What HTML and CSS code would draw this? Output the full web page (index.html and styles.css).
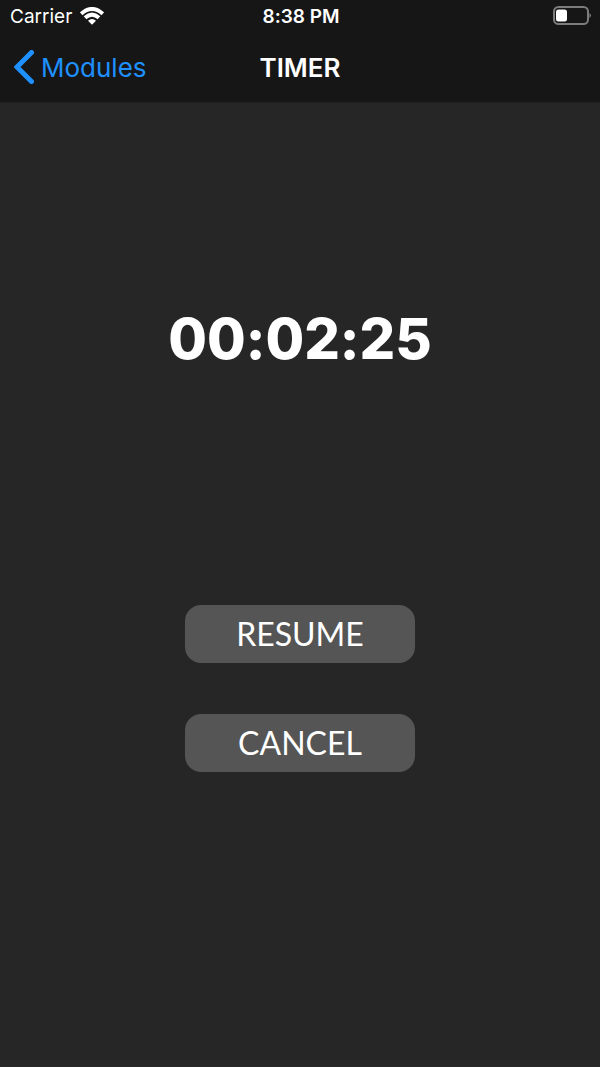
FILE: index.html
```html
<!DOCTYPE html>
<html lang="en">
<head>
  <meta charset="UTF-8" />
  <meta name="viewport" content="width=device-width, initial-scale=1.0"/>
  <title>Timer</title>
  <link rel="stylesheet" href="styles.css">
</head>
<body>
  <header>
    <div class="status-bar">
      <div class="carrier">
        <span>Carrier</span>
        <svg class="wifi" viewBox="0 0 24 18" aria-hidden="true">
          <path d="M1.2 6.8Q12 -2.8 22.8 6.8" />
          <path d="M5 10.8Q12 4.6 19 10.8" />
          <path class="dot" d="M8 13.8Q12 10.4 16 13.8L12 17.8Z" />
        </svg>
      </div>
      <time class="clock">8:38 PM</time>
      <svg class="battery" viewBox="0 0 39 20" role="img" aria-label="Battery">
        <rect class="shell" x="1" y="1" width="34" height="17" rx="4.5" />
        <rect class="level" x="3" y="3.5" width="11" height="12" rx="2.5" />
        <path class="cap" d="M36.5 7Q39.5 9.5 36.5 12Z" />
      </svg>
    </div>
    <nav class="nav-bar">
      <a class="back" href="#modules">
        <svg class="chevron" viewBox="0 0 20 34" aria-hidden="true">
          <path d="M17.5 2.5L3 17L17.5 31.5" />
        </svg>
        <span>Modules</span>
      </a>
      <h1>TIMER</h1>
    </nav>
  </header>

  <main>
    <p class="countdown" role="timer">00:02:25</p>
    <div class="controls">
      <button type="button">RESUME</button>
      <button type="button">CANCEL</button>
    </div>
  </main>
</body>
</html>
```

FILE: styles.css
```css
* {
  margin: 0;
  padding: 0;
  box-sizing: border-box;
}

body {
  min-height: 100vh;
  background: #262626;
  color: #ffffff;
  font-family: 'Inter', sans-serif;
}

header {
  background: #161616;
  border-bottom: 1px solid #202020;
}

.status-bar {
  display: grid;
  grid-template-columns: 1fr auto 1fr;
  align-items: center;
  height: 32px;
  padding: 0 8px 0 10px;
  font-size: 19px;
}

.carrier {
  display: flex;
  align-items: center;
  gap: 8px;
}

.wifi {
  width: 24px;
  height: 18px;
  fill: none;
  stroke: #ffffff;
  stroke-width: 4;
}

.wifi .dot {
  fill: #ffffff;
  stroke: none;
}

/* keep the colons on the baseline */
.clock,
.countdown {
  font-variant-ligatures: no-contextual;
}

.clock {
  font-weight: 600;
}

.battery {
  justify-self: end;
  width: 39px;
  height: 20px;
}

.shell {
  fill: none;
  stroke: #7c7c7c;
  stroke-width: 2;
}

.level {
  fill: #ffffff;
}

.cap {
  fill: #7c7c7c;
}

.nav-bar {
  display: grid;
  grid-template-columns: 1fr auto 1fr;
  align-items: center;
  height: 70px;
  padding: 0 14px;
}

.back {
  display: flex;
  align-items: center;
  gap: 7px;
  color: #1e90ff;
  font-size: 26px;
  text-decoration: none;
}

.chevron {
  width: 20px;
  height: 34px;
  fill: none;
  stroke: #1e90ff;
  stroke-width: 5;
  stroke-linecap: round;
}

h1 {
  font-size: 26px;
  font-weight: 600;
}

main {
  display: flex;
  flex-direction: column;
  align-items: center;
  padding: 200px 20px 40px;
}

.countdown {
  margin-bottom: 230px;
  font-size: 56px;
  font-weight: 800;
  line-height: 72px;
}

.controls {
  display: flex;
  flex-direction: column;
  gap: 51px;
}

.controls button {
  width: 230px;
  padding: 9px 0;
  border: none;
  border-radius: 16px;
  background: #555555;
  color: #ffffff;
  font-family: 'Lato', sans-serif;
  font-size: 32px;
  line-height: 40px;
  cursor: pointer;
}
```
